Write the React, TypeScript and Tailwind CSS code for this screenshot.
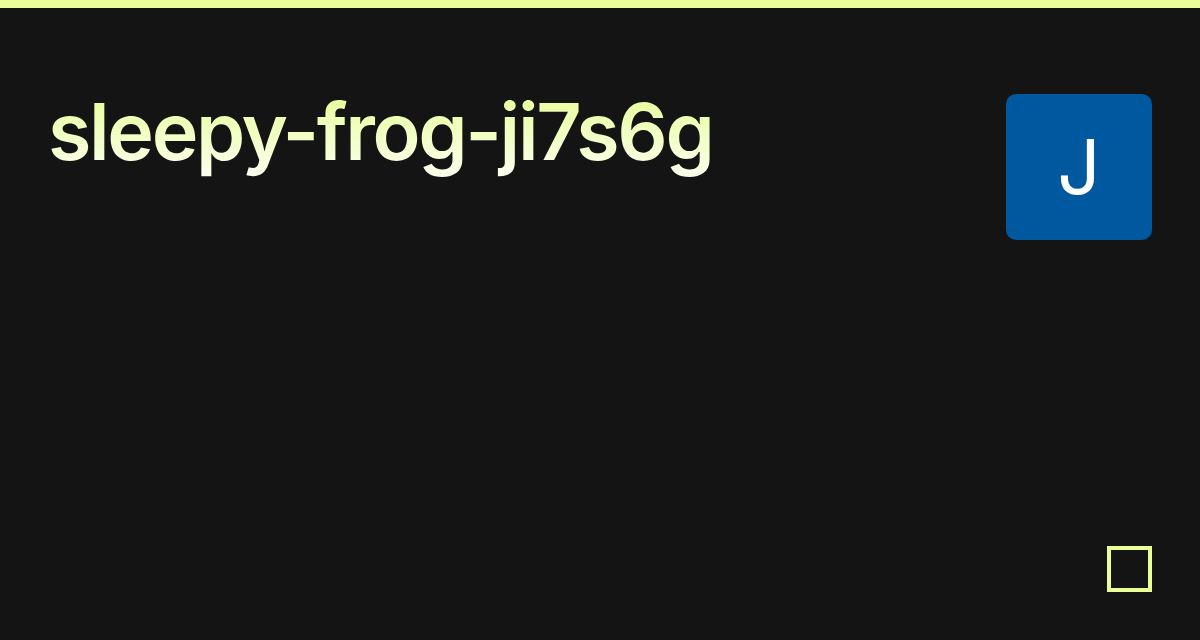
export default function App() {
  return (
    <div className="w-[1200px] h-[640px] bg-[#141414] flex flex-col overflow-hidden" style={{ fontFamily: "Inter, 'Liberation Sans', sans-serif" }}>
      <div className="h-2 bg-[#e9ff98] shrink-0" />
      <div className="flex-1 flex flex-col justify-between px-12 pt-[86px] pb-12">
        <div className="flex justify-between items-start">
          <h1 className="text-[79px] leading-[1.25] font-semibold tracking-[-0.03em] mt-[-12px] bg-gradient-to-b from-[#e4ff8c] to-[#fdfff0] bg-clip-text text-transparent">
            sleepy-frog-ji7s6g
          </h1>
          <div className="w-[146px] h-[146px] rounded-[10px] bg-[#00589f] flex items-center justify-center text-white text-[76px] leading-none font-normal pb-[2px]">
            J
          </div>
        </div>
        <div className="flex justify-end">
          <div className="w-[45px] h-[46px] border-4 border-[#e9ff98]" />
        </div>
      </div>
    </div>
  );
}
